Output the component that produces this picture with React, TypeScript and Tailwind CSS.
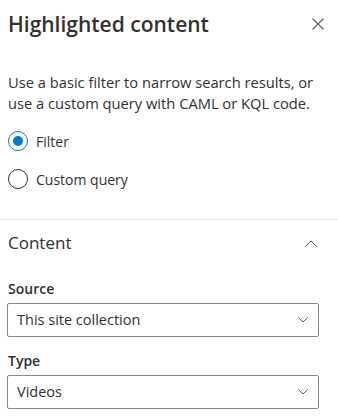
import React from 'react';

const font = { fontFamily: '"Open Sans", "Noto Sans", sans-serif' };

const Chevron = ({ up = false }: { up?: boolean }) => (
    <svg width="12" height="7" viewBox="0 0 12 7" fill="none" stroke="#605e5c" strokeWidth="1">
        {up ? <path d="M0.5 6.5 L6 1 L11.5 6.5" /> : <path d="M0.5 0.5 L6 6 L11.5 0.5" />}
    </svg>
);

const Radio = ({ checked, label }: { checked: boolean; label: string }) => (
    <label className="flex h-[20px] items-center gap-2">
        <span className={`flex h-5 w-5 items-center justify-center rounded-full border ${checked ? 'border-[#0078d4]' : 'border-[#323130]'}`}>
            {checked && <span className="h-[10px] w-[10px] rounded-full bg-[#0078d4]" />}
        </span>
        <span className="text-[14px] text-[#323130]">{label}</span>
    </label>
);

const Dropdown = ({ value }: { value: string }) => (
    <div className="mr-[19px] box-border flex h-[34px] items-center justify-between rounded-[2px] border border-[#8a8886] pl-[9px] pr-[10px]">
        <span className="text-[14.5px] text-[#323130]">{value}</span>
        <svg width="10" height="6" viewBox="0 0 10 6" fill="none" stroke="#605e5c" strokeWidth="1">
            <path d="M0.5 0.5 L5 5 L9.5 0.5" />
        </svg>
    </div>
);

export default function App() {
    return (
        <div className="h-[417px] w-[338px] overflow-hidden bg-white text-[#323130]" style={font}>
            <div className="flex items-center justify-between pl-[8px] pr-[4px] pt-[8px]">
                <h1 className="text-[21px] font-semibold leading-[28px]">Highlighted content</h1>
                <button className="flex h-8 w-8 items-center justify-center">
                    <svg width="12" height="12" viewBox="0 0 12 12" stroke="#605e5c" strokeWidth="1.1">
                        <path d="M0.5 0.5 L11.5 11.5 M11.5 0.5 L0.5 11.5" />
                    </svg>
                </button>
            </div>
            <div className="px-[8px] pt-[32px]">
                <p className="text-[14.7px] leading-[21px]">
                    Use a basic filter to narrow search results, or use a custom query with CAML or KQL code.
                </p>
                <div className="mt-[17px] flex flex-col gap-[18px]">
                    <Radio checked label="Filter" />
                    <Radio checked={false} label="Custom query" />
                </div>
            </div>
            <div className="mt-[30px] h-px bg-[#edebe9]" />
            <div className="flex items-center justify-between pl-[8px] pr-[21px] pt-[10px]">
                <span className="text-[17px] leading-[26px]">Content</span>
                <Chevron up />
            </div>
            <div className="pl-[7px] pt-[23px]">
                <div className="mb-[4px] pl-[1px] text-[14px] font-semibold leading-[20px]">Source</div>
                <Dropdown value="This site collection" />
                <div className="mb-[4px] mt-[14px] pl-[1px] text-[14px] font-semibold leading-[20px]">Type</div>
                <Dropdown value="Videos" />
            </div>
        </div>
    );
}
